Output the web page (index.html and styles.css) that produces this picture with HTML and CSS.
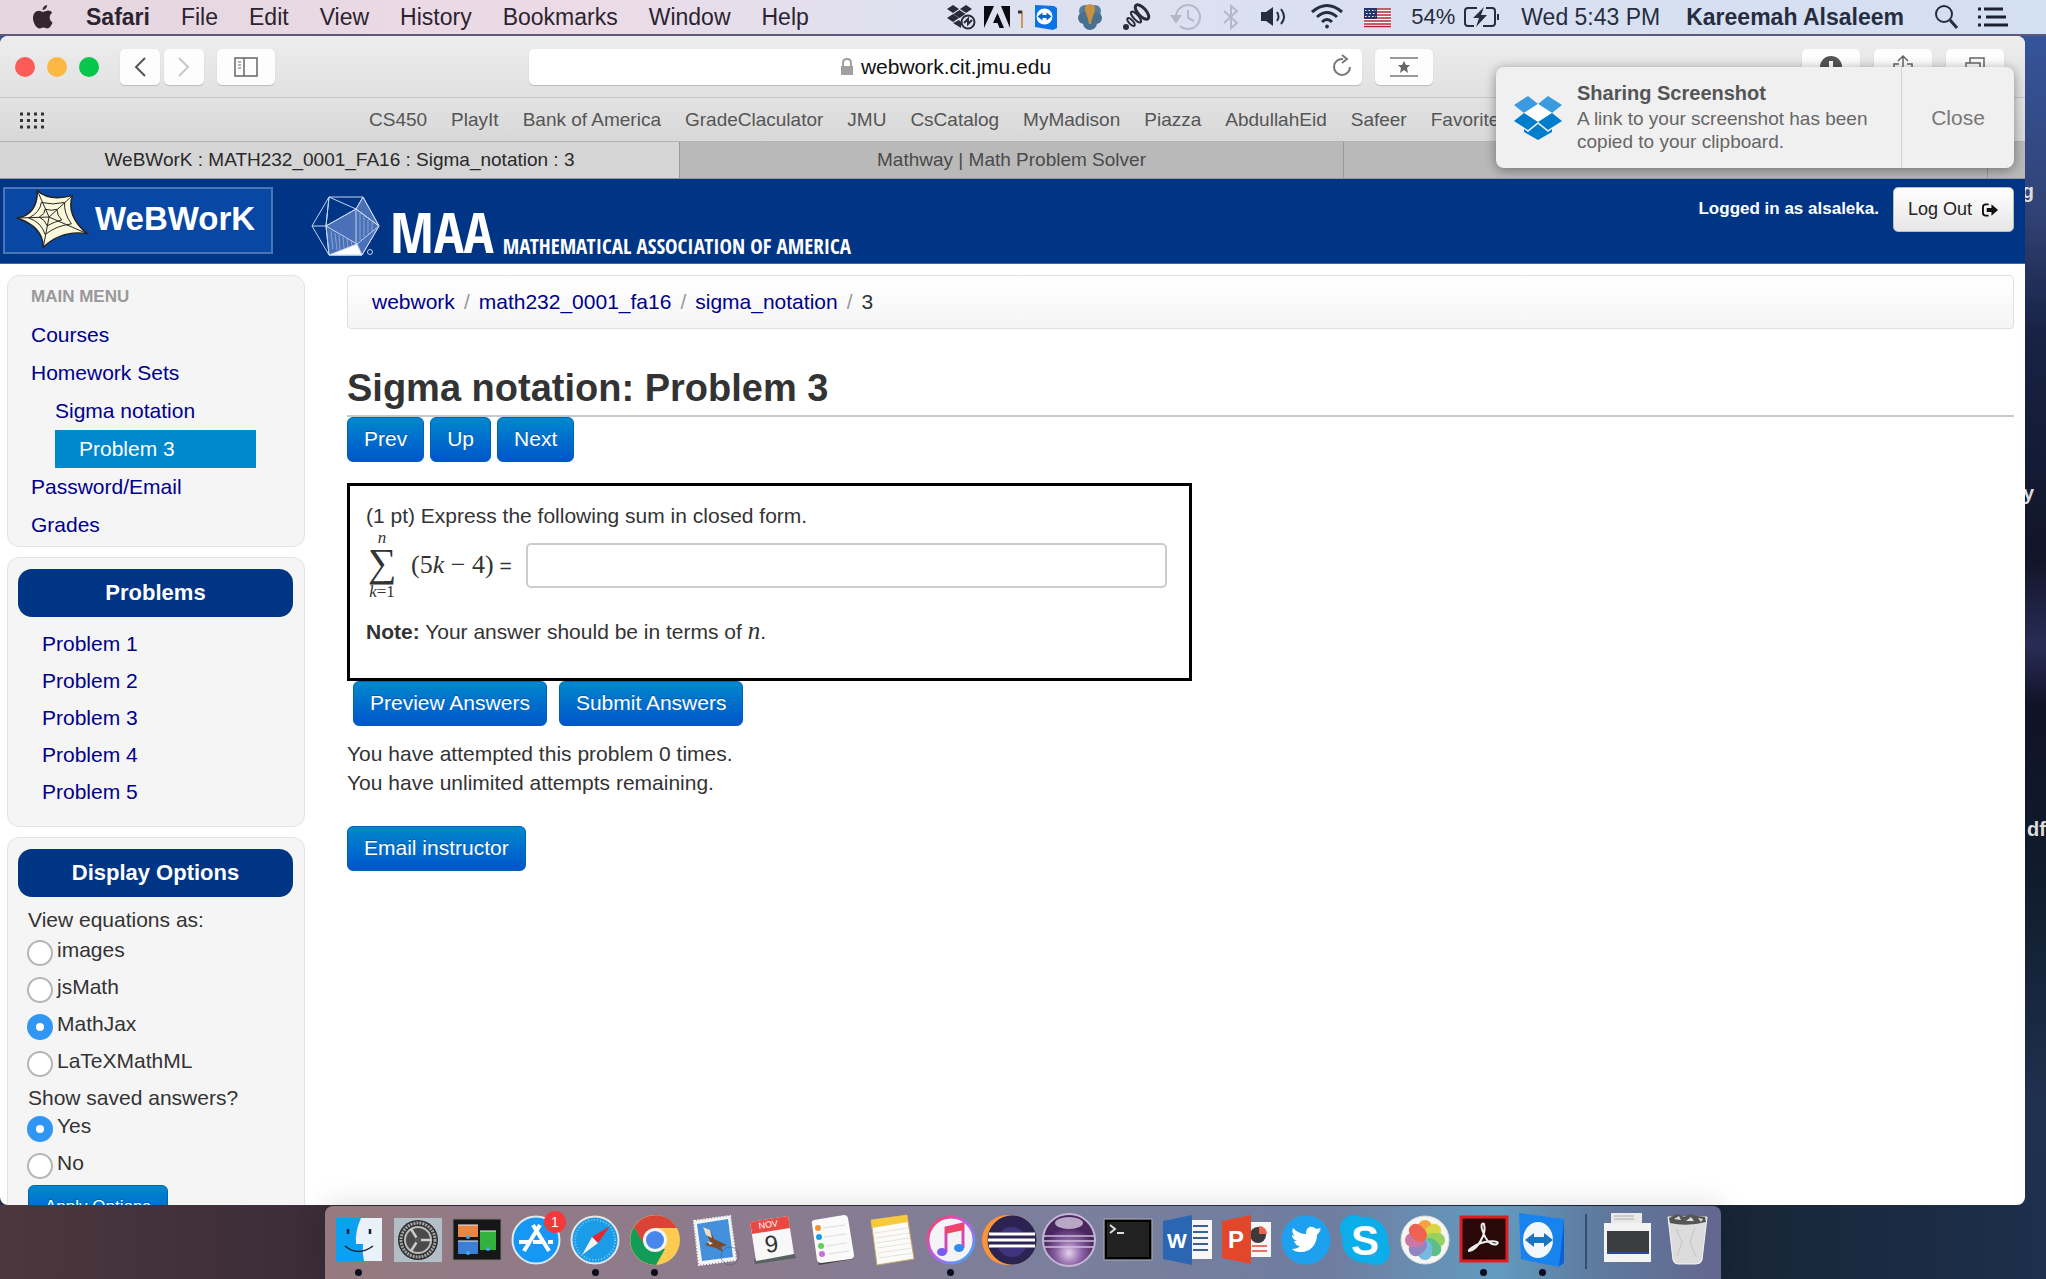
FILE: index.html
```html
<!DOCTYPE html>
<html lang="en">
<head>
  <meta charset="UTF-8">
  <title>WeBWorK : MATH232_0001_FA16 : Sigma_notation : 3</title>
  <link rel="stylesheet" href="styles.css">
</head>
<body>
  <!-- Menu bar -->
  <header class="menubar">
    <svg class="apple" width="22" height="26" viewBox="0 0 22 26"><path fill="#33262f" d="M15 1c.2 2.600-2 5-4.300 5C10.400 3.600 12.600 1.300 15 1zM20.500 18.500c-1.300 3.500-3.200 6-5 6-1.600 0-2.200-1-4-1s-2.500 1-4 1C4.500 24.500 1 19 1 14c0-4.500 2.700-7.300 5.700-7.300 1.800 0 3.200 1.200 4.500 1.200s2.800-1.300 5-1.300c1.500 0 3 .8 4 2.200-3.700 2.400-3 7.900.3 9.700z"/></svg>
    <nav class="menus">
      <b>Safari</b><span>File</span><span>Edit</span><span>View</span><span>History</span><span>Bookmarks</span><span>Window</span><span>Help</span>
    </nav>
    <div class="status">
      <svg class="tight" width="30" height="26" viewBox="0 0 30 26"><path fill="#2b2a38" d="M7 1l6 4-6 4-6-4zM20 1l6 4-6 4-6-4zM7 10l6 4-6 4-6-4zM13.500 6l6 4-6 4-6-4zM7 19l6-3 2 2v6z"/><circle cx="22" cy="18" r="6.500" fill="#dfe1f0" stroke="#2b2a38" stroke-width="2"/><path d="M18 19l4-4v5l4-4" fill="none" stroke="#2b2a38" stroke-width="2"/></svg>
      <svg class="tight" width="42" height="22" viewBox="0 0 42 22"><path fill="#0b0b12" d="M0 0h10L0 22zM17 0h9v22zM13.500 7L20 22h-4.500l-2-5H9z"/><path stroke="#c79a5e" stroke-width="2" d="M38 5v17"/><path stroke="#333" stroke-width="3" d="M34 6h4"/></svg>
      <svg width="24" height="26" viewBox="0 0 24 26"><path fill="#0874e8" d="M1 1l19 1 3 2v20l-4 2-18-3z"/><circle cx="10.500" cy="12.500" r="8" fill="#fff"/><path fill="#0a66c8" d="M3.500 12.500l5-4v2.500h4V8.500l5 4-5 4V14h-4v2.500z"/></svg>
      <svg width="24" height="26" viewBox="0 0 24 26"><circle cx="7" cy="7" r="6" fill="#557d9c"/><circle cx="17" cy="7" r="6" fill="#557d9c"/><circle cx="6" cy="14" r="6" fill="#47718f"/><circle cx="18" cy="14" r="6" fill="#47718f"/><circle cx="12" cy="19" r="7" fill="#47718f"/><path fill="#c8903f" d="M7 4c0-5 10-5 10 0 0 6-3 8-4 16h-2C10 12 7 10 7 4z"/></svg>
      <svg width="28" height="26" viewBox="0 0 28 26" fill="none" stroke="#2b2a38" stroke-width="2"><circle cx="4" cy="23" r="2" fill="#2b2a38"/><ellipse cx="9" cy="18" rx="2" ry="5" transform="rotate(-42 9 18)"/><ellipse cx="14" cy="13" rx="2.500" ry="7" transform="rotate(-42 14 13)"/><ellipse cx="20" cy="8" rx="4" ry="9" transform="rotate(-42 20 8)" stroke-width="3"/></svg>
      <svg width="32" height="28" viewBox="0 0 32 28" fill="none" stroke="#b4b8c8" stroke-width="2"><path d="M6 13a12 12 0 1 1 4 10M18 7v8l6 3"/><path fill="#b4b8c8" d="M2 13h8l-4 6z"/></svg>
      <svg width="18" height="26" viewBox="0 0 18 26"><path fill="none" stroke="#b4b8c8" stroke-width="2" d="M2 7l13 12-6 5V2l6 5L2 19"/></svg>
      <svg width="30" height="24" viewBox="0 0 30 24"><path fill="#272d40" d="M1 7h5l7-5v19l-7-5H1z"/><path fill="none" stroke="#272d40" stroke-width="2" d="M17 7q3 5 0 9M21 4q6 8 0 15"/></svg>
      <svg width="34" height="26" viewBox="0 0 34 26" fill="none" stroke="#272d40" stroke-width="3"><path d="M2 8q15-13 30 0M7 13q10-9 20 0M12 18q5-5 10 0"/><circle cx="17" cy="22.500" r="1.500" fill="#272d40" stroke-width="1"/></svg>
      <svg width="27" height="19" viewBox="0 0 27 19"><path fill="#fff" d="M0 0h27v19H0z"/><path stroke="#b3263a" stroke-width="1.500" d="M0 1h27M0 4h27M0 7h27M0 10h27M0 13h27M0 16h27M0 18.500h27"/><path fill="#26346e" d="M0 0h13v11H0z"/><path stroke="#fff" stroke-width="1.200" stroke-dasharray="1.500 2" d="M1 2.500h11M2 5.500h10M1 8.500h11"/></svg>
      <span class="percent">54%</span>
      <svg width="38" height="22" viewBox="0 0 38 22"><path fill="none" stroke="#272d40" stroke-width="2" d="M14 2H5Q2 2 2 5v12q0 3 3 3h6M20 20h9q3 0 3-3V5q0-3-3-3h-6M35 8v6"/><path fill="#272d40" d="M21 1L10 12h6l-3 9 11-12h-6z"/></svg>
      <span class="clock">Wed 5:43 PM</span>
      <b class="user">Kareemah Alsaleem</b>
      <svg width="24" height="26" viewBox="0 0 24 26" fill="none" stroke="#272d40" stroke-width="2"><circle cx="10" cy="10" r="8"/><path stroke-width="3" d="M16 16l7 8"/></svg>
      <svg class="list" width="30" height="20" viewBox="0 0 30 20"><path stroke="#1d2233" stroke-width="3" d="M0 2h3M6 2h19M0 10h3M8 10h20M0 18h3M6 18h24"/></svg>
    </div>
  </header>

  <div class="desktop">
    <span class="file-label label-g">g</span>
    <span class="file-label label-y">y</span>
    <span class="file-label label-df">df</span>

    <!-- Safari window -->
    <div class="window">
      <div class="toolbar">
        <div class="lights"><i class="red"></i><i class="yellow"></i><i class="green"></i></div>
        <div class="history">
          <button class="tool narrow" aria-label="Back"><svg width="14" height="22" viewBox="0 0 14 22"><path fill="none" stroke="#555" stroke-width="2" d="M12 2L3 11l9 9"/></svg></button>
          <button class="tool narrow" aria-label="Forward"><svg width="14" height="22" viewBox="0 0 14 22"><path fill="none" stroke="#c8c8c8" stroke-width="2" d="M2 2l9 9-9 9"/></svg></button>
        </div>
        <button class="tool" aria-label="Sidebar"><svg width="24" height="20" viewBox="0 0 24 20" fill="none" stroke="#666" stroke-width="1.500"><path d="M1 1h22v18H1zM10 1v18"/><path stroke-width="1" d="M4 5h3M4 8h3M4 11h3"/></svg></button>
        <div class="address">
          <svg width="14" height="18" viewBox="0 0 14 18"><path fill="#a0a0a0" d="M1 8h12v9H1z"/><path fill="none" stroke="#a0a0a0" stroke-width="2" d="M3 8V5q0-4 4-4t4 4v3"/></svg>
          <span>webwork.cit.jmu.edu</span>
          <svg class="reload" width="20" height="22" viewBox="0 0 20 22"><path fill="none" stroke="#777" stroke-width="2" d="M11 4a8 8 0 1 0 7 8M10 0l5 4-5 4"/></svg>
        </div>
        <button class="tool" aria-label="Top sites"><svg width="28" height="20" viewBox="0 0 28 20"><path stroke="#999" stroke-width="2" d="M0 1h28M0 19h28"/><path fill="#666" d="M14 4l2 4h4l-3 3 1 5-4-3-4 3 1-5-3-3h4z"/></svg></button>
        <div class="right-tools">
          <button class="tool" aria-label="Downloads"><svg width="22" height="22" viewBox="0 0 22 22"><circle cx="11" cy="11" r="11" fill="#555"/><path stroke="#fff" stroke-width="4" d="M11 5v10"/></svg></button>
          <button class="tool" aria-label="Share"><svg width="20" height="26" viewBox="0 0 20 26"><path fill="none" stroke="#666" stroke-width="1.500" d="M6 10H1v14h18V10h-5M10 17V2M5 7l5-5 5 5"/></svg></button>
          <button class="tool" aria-label="Tabs"><svg width="20" height="20" viewBox="0 0 20 20"><path fill="none" stroke="#666" stroke-width="1.500" d="M1 6h14v13H1zM5 6V1h14v12h-4"/></svg></button>
        </div>
      </div>
      <div class="favorites">
        <svg class="grid" width="24" height="17" viewBox="0 0 24 17"><path stroke="#333" stroke-width="3" stroke-dasharray="3 4" d="M0 2h24M0 8.500h24M0 15h24"/></svg>
        <a href="#">CS450</a><a href="#">PlayIt</a><a href="#">Bank of America</a><a href="#">GradeClaculator</a><a href="#">JMU</a><a href="#">CsCatalog</a><a href="#">MyMadison</a><a href="#">Piazza</a><a href="#">AbdullahEid</a><a href="#">Safeer</a><a href="#">Favorites</a>
      </div>
      <div class="tabs">
        <div class="tab active">WeBWorK : MATH232_0001_FA16 : Sigma_notation : 3</div>
        <div class="tab second">Mathway | Math Problem Solver</div>
        <div class="tab"></div>
        <button class="new-tab" aria-label="New tab">+</button>
      </div>

      <!-- Page -->
      <div class="masthead">
        <a class="webwork" href="#">
          <svg width="72" height="60" viewBox="0 0 74 60"><path fill="#fbf8dc" stroke="#222" stroke-width="1.500" d="M23 1q12 11 36 5-7 20 15 39-26-4-45 14 0-21-27-30 21-3 21-28z"/><path fill="none" stroke="#222" stroke-width="1" d="M23 1l12 27L59 6M35 28l39 17M35 28l-6 31M35 28L2 29M27 13q12 3 24 0-1 11 7 22-16 2-27 11-4-13-17-17 12-6 13-16zM31 20q7 2 12 0 0 6 5 11-8 2-15 6-2-6-8-9 6-3 6-8z"/></svg>
          <span>WeBWorK</span>
        </a>
        <a class="maa" href="#">
          <svg width="70" height="62" viewBox="0 0 70 62" fill="none" stroke="#c5d4ef" stroke-width="1"><path fill="#4a70b8" d="M45 14l23 17-17 29-33 0-3-29z"/><path fill="#4a70b8" d="M52 2l16 29-23-17z"/><path d="M18 2h34l16 29-17 29H18L1 31zM18 2l27 12L15 31zM52 2l-7 12 23 17-22 18L15 31 1 31M45 14v35M15 31l3 29M18 2l-3 29"/><path fill="#fff" d="M18 60l28-11 5 11z"/><path stroke-width="0.500" d="M20 36l2 18M24 38l2 17M28 40l1 15M32 42l1 11M36 44l1 8M40 46l1 5M49 18v27M53 21v21M57 24v15M61 27v9"/><circle cx="59" cy="57" r="2.500"/></svg>
          <b>MAA</b><strong>MATHEMATICAL ASSOCIATION OF AMERICA</strong>
        </a>
        <div class="login">
          <b>Logged in as alsaleka.</b>
          <button class="logout">Log Out <svg width="17" height="16" viewBox="0 0 18 16"><path fill="none" stroke="#111" stroke-width="2" d="M7 2H4Q1 2 1 5v6q0 3 3 3h3"/><path fill="#111" d="M5 6h5V2l7 6-7 6v-4H5z"/></svg></button>
        </div>
      </div>

      <div class="page">
        <aside class="sidebar">
          <nav class="well main-menu">
            <h2>MAIN MENU</h2>
            <a href="#">Courses</a>
            <a href="#">Homework Sets</a>
            <a class="sub" href="#">Sigma notation</a>
            <a class="sub current" href="#">Problem 3</a>
            <a href="#">Password/Email</a>
            <a href="#">Grades</a>
          </nav>
          <nav class="well problems">
            <h2>Problems</h2>
            <a href="#">Problem 1</a>
            <a href="#">Problem 2</a>
            <a href="#">Problem 3</a>
            <a href="#">Problem 4</a>
            <a href="#">Problem 5</a>
          </nav>
          <form class="well options">
            <h2>Display Options</h2>
            <p>View equations as:</p>
            <label><input type="radio" name="mode">images</label>
            <label><input type="radio" name="mode">jsMath</label>
            <label><input type="radio" name="mode" checked>MathJax</label>
            <label><input type="radio" name="mode">LaTeXMathML</label>
            <p>Show saved answers?</p>
            <label><input type="radio" name="saved" checked>Yes</label>
            <label><input type="radio" name="saved">No</label>
            <button type="button" class="btn">Apply Options</button>
          </form>
        </aside>

        <main class="content">
          <nav class="breadcrumb">
            <a href="#">webwork</a><i>/</i><a href="#">math232_0001_fa16</a><i>/</i><a href="#">sigma_notation</a><i>/</i><span>3</span>
          </nav>
          <h1>Sigma notation: Problem 3</h1>
          <div class="btn-row">
            <button class="btn">Prev</button><button class="btn">Up</button><button class="btn">Next</button>
          </div>
          <div class="problem">
            <p>(1 pt) Express the following sum in closed form.</p>
            <div class="equation">
              <div class="sum"><i>n</i><span>∑</span><small><i>k</i>=1</small></div>
              <label for="answer"><span class="math">(5<i>k</i> − 4)</span> =</label>
              <input type="text" id="answer">
            </div>
            <p class="note"><b>Note:</b> Your answer should be in terms of <i>n</i>.</p>
          </div>
          <div class="btn-row answers">
            <button class="btn">Preview Answers</button><button class="btn">Submit Answers</button>
          </div>
          <p class="attempts">You have attempted this problem 0 times.<br>You have unlimited attempts remaining.</p>
          <button class="btn">Email instructor</button>
        </main>
      </div>
    </div>

    <!-- Notification -->
    <div class="notification">
      <svg width="48" height="44" viewBox="0 0 48 44"><path fill="#3b9be0" d="M14 0l10 8-14 9L0 9zM34 0l14 9-10 8-14-9z"/><path fill="#fff" d="M24 8l14 9-14 9-14-9z"/><path fill="#007ecb" d="M10 17l14 9-10 8L0 25zM38 17l10 8-14 9-10-8zM24 28l10 8 4-3v3l-14 8-14-8v-3l4 3z"/></svg>
      <div class="message"><b>Sharing Screenshot</b><p>A link to your screenshot has been<br>copied to your clipboard.</p></div>
      <button>Close</button>
    </div>

    <!-- Dock -->
    <div class="dock">
      <div class="app running"><svg viewBox="0 0 50 50"><path fill="#0aa2f0" d="M2 3h46v43H2z"/><path fill="#e9f1fa" d="M27 3h21v43H30q-2-8-1-17h-7Q21 16 27 3z"/><path fill="none" stroke="#123" stroke-width="1.500" d="M11 31q13 11 28 0"/><path stroke="#123" stroke-width="2.500" d="M14 14v5M36 14v5"/></svg></div>
      <div class="app"><svg viewBox="0 0 50 50"><path fill="#b2bfc8" d="M1 3h48v44H1z"/><circle cx="25" cy="25" r="20" fill="#2e2e30"/><circle cx="25" cy="25" r="17" fill="none" stroke="#a4a4a4" stroke-width="3" stroke-dasharray="2 1"/><circle cx="25" cy="25" r="13" fill="#4a4a4a" stroke="#bbb" stroke-width="2"/><path stroke="#ccc" stroke-width="2.500" d="M25 25h13M25 25l-7-11M25 25l-7 11"/><circle cx="25" cy="25" r="3" fill="#555"/></svg></div>
      <div class="app"><svg viewBox="0 0 50 50"><path fill="#161616" stroke="#777" d="M1 4h48v41H1z"/><path fill="#e98642" d="M6 10h20v12H6z"/><path fill="#3c7fd5" d="M6 26h20v13H6z"/><path fill="#32b23a" d="M28 16h16v19H28z"/><path stroke="#eee" d="M6 10h20M6 26h20M28 16h16"/><circle cx="16" cy="22" r="2" fill="#45a7f0"/><circle cx="16" cy="38" r="2" fill="#45a7f0"/><circle cx="36" cy="34" r="2" fill="#45a7f0"/></svg></div>
      <div class="app"><svg viewBox="0 0 50 50"><circle cx="25" cy="25" r="23.500" fill="#1598f5" stroke="#dfe8ef" stroke-width="2"/><path fill="none" stroke="#fff" stroke-width="4" d="M29 10L13 36M22 10l16 26M8 27h10M22 27h11M37 27h5"/></svg><span class="badge">1</span></div>
      <div class="app running"><svg viewBox="0 0 50 50"><circle cx="25" cy="25" r="23.500" fill="#1a9ce8" stroke="#e5e5e5" stroke-width="2"/><circle cx="25" cy="25" r="20" fill="none" stroke="#7cc8f2" stroke-width="2" stroke-dasharray="1 2"/><path fill="#e8262d" d="M40 11L28 28l-6-6z"/><path fill="#f2f2f2" d="M12 40l10-18 6 6z"/></svg></div>
      <div class="app running"><svg viewBox="0 0 50 50"><circle cx="25" cy="25" r="25" fill="#fccb4f"/><path fill="#da4437" d="M4 12A25 25 0 0 1 47 13H25L14 30z"/><path fill="#119d58" d="M4 12l11 19 20 3-9 16A25 25 0 0 1 4 12z"/><circle cx="25" cy="25" r="12" fill="#f3f3f3"/><circle cx="25" cy="25" r="9" fill="#4787ed"/></svg></div>
      <div class="app"><svg viewBox="0 0 50 50"><path fill="#f4f4f4" stroke="#f4f4f4" stroke-width="2" stroke-dasharray="2 1" d="M5 6l36-5 6 44-37 5z"/><path fill="#4391dc" d="M8 9l31-5 5 38-31 4z"/><path fill="#7c4a2c" d="M14 12l7 3 4 9 13 6-6 2 2 5-7-4-11-3 5-4z"/><path fill="#e9ddcc" d="M14 12l7 3 2 8-6-3zM18 26l6 2-3 2z"/><circle cx="41" cy="41" r="9" fill="none" stroke="#4b5576" opacity=".5"/></svg></div>
      <div class="app"><svg viewBox="0 0 50 50"><path fill="#596261" d="M6 44l40-6 2 5-41 6z"/><path fill="#f8f8f8" d="M2 7l38-6 6 38-38 7z"/><path fill="#e84943" d="M2 7l38-6 2 12L4 19z"/><text x="11" y="14" font-size="9" fill="#fff" transform="rotate(-8 11 14)">NOV</text><text x="18" y="38" font-size="24" fill="#333" transform="rotate(-8 18 38)">9</text></svg></div>
      <div class="app"><svg viewBox="0 0 50 50"><path fill="#444" d="M11 45l35-5v4l-34 6z"/><path fill="#fafafa" d="M5 9Q4 6 7 5l30-5q3 0 4 3l6 37q0 3-3 4l-30 4q-3 0-4-3z"/><path stroke="#ddd" d="M16 13l22-3M17 22l22-3M19 31l21-3M21 39l21-3"/><circle cx="11" cy="13" r="3" fill="#f78f31"/><circle cx="12" cy="22" r="3" fill="#159ee8"/><circle cx="14" cy="31" r="3" fill="#5fd255"/><circle cx="15" cy="39" r="3" fill="#ca6edd"/></svg></div>
      <div class="app"><svg viewBox="0 0 50 50"><path fill="#fcfbf7" stroke="#c5a868" d="M4 5l36-5 7 44-37 6z"/><path fill="#f7ca3e" d="M4 5l36-5 1 7L5 13z"/><path stroke="#e4e4e4" d="M8 18l33-5M9 23l33-5M9 28l34-5M10 33l34-5M11 38l34-5M12 43l34-5"/></svg></div>
      <div class="app running"><svg viewBox="0 0 50 50"><defs><linearGradient id="ring" x2="1" y2="1"><stop stop-color="#fc3d55"/><stop offset=".5" stop-color="#c05af0"/><stop offset="1" stop-color="#22b8f7"/></linearGradient></defs><circle cx="25" cy="25" r="23" fill="#f4f4f8" stroke="url(#ring)" stroke-width="3"/><path fill="none" stroke="#d44ab5" stroke-width="3" d="M20 37V13l17-4v24"/><path fill="#f04468" d="M19 12l19-4v7l-19 4z"/><ellipse cx="16" cy="37" rx="5" ry="4" fill="#775df2"/><ellipse cx="33" cy="33" rx="5" ry="4" fill="#318cf0"/></svg></div>
      <div class="app"><svg viewBox="0 0 50 50"><circle cx="22" cy="25" r="25" fill="#f7943d"/><circle cx="27" cy="25" r="24" fill="#2d2353" stroke="#272040"/><circle cx="27" cy="27" r="15" fill="#41347f"/><path fill="#2d2353" d="M5 17h44v16H5z"/><path stroke="#fff" stroke-width="3" d="M4 19h46M3 25h47M4 31h46"/></svg></div>
      <div class="app"><svg viewBox="0 0 50 50"><defs><radialGradient id="orb" cx=".5" cy=".75"><stop stop-color="#e5d2ef"/><stop offset=".5" stop-color="#8c63a5"/><stop offset="1" stop-color="#49265e"/></radialGradient></defs><circle cx="25" cy="25" r="26" fill="url(#orb)" stroke="#c5b6d4" stroke-width="2"/><ellipse cx="25" cy="8" rx="14" ry="6" fill="#d6c9df" opacity=".8"/><path stroke="#d6c3e4" stroke-width="2" d="M0 21h50M0 26h50M1 32h48" opacity=".7"/></svg></div>
      <div class="app"><svg viewBox="0 0 50 50"><path fill="#222" stroke="#a9adb0" d="M1 4h48v41H1z"/><path stroke="#000" stroke-width="2" fill="none" d="M3 6h44v37H3z"/><path fill="none" stroke="#ddd" stroke-width="2" d="M7 10l5 4-5 4M14 18h7"/></svg></div>
      <div class="app"><svg viewBox="0 0 50 50"><path fill="#f7f7f7" d="M27 5h22v39H27z"/><path stroke="#3c5f94" stroke-width="2" d="M30 11h15M30 17h15M30 23h15M30 29h15M30 35h15"/><path fill="#2c66b2" d="M0 6l29-6v50L0 44z"/><text x="14" y="33" font-size="21" font-weight="bold" fill="#fff" text-anchor="middle">W</text></svg></div>
      <div class="app"><svg viewBox="0 0 50 50"><path fill="#f7f7f7" d="M27 7h22v35H27z"/><circle cx="36" cy="20" r="8" fill="#3b3b3b"/><path fill="#e86650" d="M37 11a8 8 0 0 1 8 8h-8z"/><path stroke="#e8735e" stroke-width="2" d="M30 31h15M30 36h15"/><path fill="#e2472c" d="M0 6l29-6v49L0 43z"/><text x="14" y="33" font-size="24" font-weight="bold" fill="#fff" text-anchor="middle">P</text></svg></div>
      <div class="app"><svg viewBox="0 0 50 50"><circle cx="25" cy="25" r="24.500" fill="#1da1ee"/><path fill="#fff" d="M40 15l-4 5c0 11-9 18-17 17-4 0-6-1-8-3 4 0 6-1 8-3-3 0-5-2-6-5h3c-3-1-5-3-5-6l3 1c-3-3-3-5-2-8 4 4 8 6 13 6 0-8 6-9 10-5l5-1-2 3z"/></svg></div>
      <div class="app"><svg viewBox="0 0 50 50"><circle cx="25" cy="25" r="23" fill="#0caeea"/><circle cx="14" cy="14" r="14" fill="#0caeea"/><circle cx="36" cy="36" r="14" fill="#0caeea"/><text x="25" y="40" font-size="42" font-weight="bold" fill="#fff" text-anchor="middle">S</text></svg></div>
      <div class="app"><svg viewBox="0 0 50 50"><circle cx="25" cy="25" r="24" fill="#f5f5f3" stroke="#ddd"/><g opacity=".9"><rect x="18" y="5" width="14" height="20" rx="7" fill="#f79b2e"/><rect x="18" y="5" width="14" height="20" rx="7" fill="#d8d435" transform="rotate(45 25 25)"/><rect x="18" y="5" width="14" height="20" rx="7" fill="#8bcf50" transform="rotate(90 25 25)"/><rect x="18" y="5" width="14" height="20" rx="7" fill="#4db77c" transform="rotate(135 25 25)"/><rect x="18" y="5" width="14" height="20" rx="7" fill="#69b4dd" transform="rotate(180 25 25)"/><rect x="18" y="5" width="14" height="20" rx="7" fill="#8779bd" transform="rotate(225 25 25)"/><rect x="18" y="5" width="14" height="20" rx="7" fill="#c46a9e" transform="rotate(270 25 25)"/><rect x="18" y="5" width="14" height="20" rx="7" fill="#ef5140" transform="rotate(315 25 25)"/></g></svg></div>
      <div class="app running"><svg viewBox="0 0 50 50"><path fill="#2a0808" stroke="#e21d21" stroke-width="3" d="M2 2h46v44H2z"/><path fill="none" stroke="#eee" stroke-width="2" d="M10 36c8-1 18-17 15-27-2-2-4 2-1 8 3 9 9 14 14 12 4-3-8-4-16-1s-13 7-12 8z"/></svg></div>
      <div class="app running"><svg viewBox="0 0 50 50"><path fill="#0b5fd8" d="M40 4l6 2v42l-6 4z"/><path fill="#1683ef" d="M1-2l45 6-5 48L3 44z"/><ellipse cx="20" cy="25" rx="15" ry="18" fill="#f3f6fa"/><path fill="#1a74c4" d="M7 25l9-7v4h10v-4l9 7-9 7v-4H16v4z"/></svg></div>
      <div class="separator"></div>
      <div class="app"><svg viewBox="0 0 50 50"><path fill="#e9e9e9" d="M8-2h31V12H8z"/><path fill="#f3f3f3" d="M1 8h47v39H1z"/><path fill="#3b3d40" d="M4 16h42v23H4z"/><path stroke="#2a4a9a" stroke-width="2" d="M4 38h42"/><path stroke="#aaa" d="M11 1h20M11 4h20"/></svg></div>
      <div class="app"><svg viewBox="0 0 50 50"><path fill="#dcdcdc" stroke="#f4f4f4" d="M6 2h39l-5 43q-1 4-6 4H16q-4 0-5-4z"/><path fill="#555" d="M7 3l8-4 7 3 6-3 7 2 8 1 1 5q-19 5-36 1z"/><path fill="#ddd" d="M12 4l5-3 2 4zM24 6l5-4 3 4zM36 3l5 1-2 3z"/><path fill="none" stroke="#c4c4c4" d="M14 14l6 13-5 14M33 13l-5 14 6 15"/></svg></div>
    </div>
  </div>
</body>
</html>
```
FILE: styles.css
```css
*{box-sizing:border-box;}
body{
  margin:0;height:100vh;overflow:hidden;display:flex;flex-direction:column;
  font-family:"Liberation Sans",Arial,sans-serif;font-size:21px;color:#333;
}
h1,h2,p{margin:0;}
a{color:#00008b;text-decoration:none;}
button{font-family:inherit;cursor:pointer;}
svg{flex:none;overflow:visible;}

/* === Menu bar === */
.menubar{
  height:36px;flex:none;display:flex;align-items:center;padding:0 38px 0 32px;
  font-size:23px;color:#2b2430;white-space:nowrap;
  background:linear-gradient(90deg,#e5d6e0,#ecdbe6 28%,#dfe1f0 45%,#d3dff2);
  border-bottom:2px solid #5d5a7c;
}
.menus{display:flex;gap:31px;margin-left:32px;}
.status{display:flex;align-items:center;gap:20px;margin-left:auto;color:#272d40;}
.status .tight{margin-right:-12px;}
.status .user{margin:0 10px 0 6px;}
.status .percent{margin-right:-12px;font-size:22px;}

/* === Desktop === */
.desktop{
  flex:1;min-height:0;position:relative;display:flex;flex-direction:column;
  background:
    linear-gradient(90deg,#4c373d,#3a2c38 16%,#2b3450 60%,#182536 84%,#1d2f4c) bottom / 100% 74px no-repeat,
    linear-gradient(#35549a,#314376 14%,#172244 24%,#111528 42%,#292c55 49%,#101226 54%,#0f1c2c 68%,#20304f 86%,#1d2f4c);
}
.file-label{position:absolute;right:12px;font-size:20px;font-weight:bold;color:#ddd;}
.label-g{top:144px;}
.label-y{top:446px;}
.label-df{top:782px;right:0;}

/* === Browser window === */
.window{
  flex:1;min-height:0;overflow:hidden;display:flex;flex-direction:column;position:relative;
  margin-right:21px;background:#fff;border-radius:8px;
}
.toolbar{
  height:62px;flex:none;display:flex;align-items:center;padding:0 21px 0 15px;
  background:linear-gradient(#ededed,#e1e1e1);border-bottom:1px solid #c6c6c6;
}
.lights{display:flex;gap:12px;margin-right:21px;}
.lights i{width:20px;height:20px;border-radius:50%;}
.red{background:#fc5b57;}
.yellow{background:#fdb844;}
.green{background:#05c74b;}
.history{display:flex;gap:4px;margin-right:13px;}
.tool{
  width:58px;height:36px;padding:0;display:flex;align-items:center;justify-content:center;flex:none;
  background:#fdfdfd;border:0;border-radius:5px;box-shadow:0 1px 1px #bbb;
}
.tool.narrow{width:40px;}
.address{
  width:833px;height:36px;margin:0 13px 0 auto;display:flex;align-items:center;justify-content:center;gap:7px;
  position:relative;background:#fff;border-radius:5px;box-shadow:0 1px 1px #bbb;color:#111;
}
.reload{position:absolute;right:10px;top:6px;}
.right-tools{display:flex;gap:14px;margin-left:369px;}
.favorites{
  height:44px;flex:none;display:flex;align-items:center;gap:24px;padding:1px 0 0 20px;white-space:nowrap;overflow:hidden;
  font-size:19px;background:linear-gradient(#e2e2e2,#d8d8d8);border-bottom:1px solid #b4b4b4;
}
.favorites a{color:#555;}
.grid{margin-right:301px;}
.tabs{height:37px;flex:none;display:flex;background:#b9b9b9;border-bottom:1px solid #999;font-size:19px;color:#4a4a4a;}
.tab{flex:64 1 0;display:flex;align-items:center;justify-content:center;border-right:1px solid #999;white-space:nowrap;}
.tab.second{flex-grow:66;}
.tab.active{flex:none;width:680px;background:#d5d5d5;color:#2a2a2a;}
.new-tab{width:37px;border:0;background:none;font-size:22px;color:#555;}

/* === Page header === */
.masthead{
  height:85px;flex:none;display:flex;align-items:flex-start;padding:8px 11px 0 3px;
  background:#003585;border-bottom:1px solid #3c66ab;color:#fff;
}
.masthead a{color:#fff;}
.webwork{
  width:270px;height:67px;padding:0 0 3px 10px;display:flex;align-items:center;gap:8px;
  background:#0848a4;border:2px solid #4a76b8;font-size:33px;font-weight:bold;
}
.maa{display:flex;align-items:flex-end;gap:9px;margin:8px 0 0 38px;font-family:"Open Sans Condensed","Liberation Sans Narrow","Liberation Sans",sans-serif;}
.maa b{font-size:56px;line-height:52px;}
.maa strong{font-size:21px;line-height:22px;}
.login{display:flex;gap:14px;margin-left:auto;font-size:18px;}
.login b{margin-top:12px;font-size:17px;}
.logout{
  height:45px;padding:0 14px;display:flex;align-items:center;gap:10px;font-size:18px;color:#222;
  background:linear-gradient(#fff,#e6e6e6);border:1px solid #bbb;border-radius:5px;
}

/* === Sidebar === */
.page{flex:1;min-height:0;display:flex;align-items:flex-start;gap:42px;padding:11px 11px 0 7px;}
.sidebar{width:298px;flex:none;}
.well{background:#f5f5f5;border:1px solid #e3e3e3;border-radius:12px;margin-bottom:10px;}
.well a{display:block;}
.main-menu{padding:5px 23px 0;height:272px;line-height:38px;}
.main-menu h2{margin-bottom:4px;font-size:17px;line-height:31px;color:#999;}
.main-menu .sub{margin-left:24px;}
.main-menu .current{margin-right:25px;padding-left:24px;background:#0088cc;color:#fff;}
.problems h2,.options h2{
  margin:11px 11px 8px 10px;line-height:48px;font-size:22px;text-align:center;
  color:#fff;background:#003585;border-radius:14px;
}
.problems{height:270px;}
.problems a{line-height:37px;margin-left:34px;}
.options p,.options .btn{margin-left:20px;}
.options p{line-height:30px;}
.options label{display:flex;align-items:center;height:37px;gap:4px;line-height:29px;padding-bottom:8px;margin-left:19px;}
.options label + p{height:28px;}
.options .btn{font-size:17px;}
.options input{
  appearance:none;width:26px;height:26px;margin:6px 0 0;flex:none;background:#fff;border:2px solid #b5b5b5;border-radius:50%;
}
.options input:checked{border:9px solid #3096f3;}

/* === Content === */
.content{flex:1;min-width:0;}
.breadcrumb{
  display:flex;gap:9px;padding:0 24px;line-height:52px;
  background:linear-gradient(#fff,#f5f5f5);border:1px solid #e0e0e0;border-radius:4px;
}
.breadcrumb i{color:#999;font-style:normal;}
h1{margin-top:32px;font-size:38px;line-height:54px;border-bottom:2px solid #c8c8c8;}
.btn{
  height:45px;padding:0 16px 2px;font-size:21px;color:#fff;text-shadow:0 -1px 0 rgba(0,0,0,.25);
  background:linear-gradient(#0088cc,#0055cc);border:1px solid #0064b4;border-radius:6px;
}
.btn-row{display:flex;gap:6px;}
.problem{
  width:845px;max-width:100%;margin-top:21px;padding:15px 22px 32px 16px;line-height:29px;border:3px solid #000;
}
.equation{display:flex;align-items:center;height:68px;padding-top:2px;}
.sum{
  width:32px;display:flex;flex-direction:column;align-items:center;
  font-family:"Liberation Serif",serif;font-size:17px;line-height:14px;
}
.sum span{margin:4px 0 8px;font-size:40px;line-height:28px;}
.sum small{font-size:17px;}
.equation label{margin-left:13px;}
.math,.note i{font-family:"Liberation Serif",serif;}
.math{font-size:26px;}
.note i{font-size:25px;}
.equation input{
  flex:1;height:45px;margin-left:14px;padding:0 9px;font-size:21px;border:2px solid #ccc;border-radius:5px;
}
.note{margin-top:18px;}
.answers{gap:12px;padding-left:6px;}
.attempts{margin:13px 0 29px;line-height:29px;}

/* === Notification === */
.notification{
  position:absolute;top:31px;right:32px;width:518px;height:101px;display:flex;align-items:center;padding-left:18px;
  background:#f0f0f0;border-radius:8px;box-shadow:0 2px 12px rgba(0,0,0,.4);color:#666;
}
.message{flex:1;margin-left:15px;padding-bottom:2px;font-size:19px;line-height:23px;white-space:nowrap;}
.message b{font-size:20px;line-height:27px;color:#555;}
.notification button{width:113px;height:100%;border:0;border-left:1px solid #d5d5d5;background:none;font-size:21px;color:#777;}

/* === Dock === */
.dock{
  height:73px;flex:none;margin:1px 325px 0;padding:0 4px;display:flex;position:relative;
  background:linear-gradient(90deg,#967a80,#8b7b8f 32%,#7b7f9c 52%,#6f7da0 72%,#629bc0 84%,#5f7a9f 91%,#64668e);
  border-radius:8px 8px 0 0;box-shadow:0 0 30px rgba(0,0,0,.15);
}
.app{flex:1;position:relative;display:flex;flex-direction:column;align-items:center;padding-top:9px;}
.app svg{width:50px;height:50px;}
.app.running::after{content:"";width:7px;height:7px;margin-top:4px;border-radius:50%;background:#0b0c1c;}
.separator{width:26px;flex:none;margin:8px 0 10px;background:linear-gradient(#2f4e70,#2f4e70) center / 2px 100% no-repeat;}
.badge{
  position:absolute;top:5px;right:0;width:22px;height:22px;border-radius:50%;
  background:#f3393b;color:#fff;font-size:14px;line-height:22px;text-align:center;
}
```
